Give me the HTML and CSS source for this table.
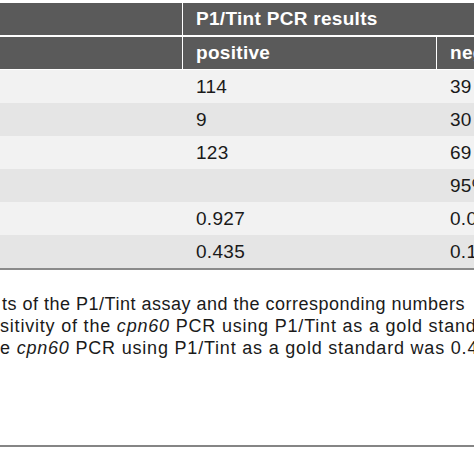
FILE: index.html
```html
<!DOCTYPE html>
<html>
<head>
<meta charset="utf-8">
<link rel="stylesheet" href="styles.css">
</head>
<body>
<div class="frame">
  <div class="table-wrap">
    <table class="results">
      <colgroup>
        <col class="c1"><col class="c2"><col class="c3">
      </colgroup>
      <thead>
        <tr class="h1">
          <th class="sep"></th>
          <th colspan="2">P1/Tint PCR results</th>
        </tr>
        <tr class="h2">
          <th class="sep"></th>
          <th class="sep">positive</th>
          <th>negative</th>
        </tr>
      </thead>
      <tbody>
        <tr class="odd"><td></td><td>114</td><td>39</td></tr>
        <tr class="even"><td></td><td>9</td><td>30</td></tr>
        <tr class="odd"><td></td><td>123</td><td>69</td></tr>
        <tr class="even"><td></td><td></td><td>95% CI</td></tr>
        <tr class="odd"><td></td><td>0.927</td><td>0.067</td></tr>
        <tr class="even last"><td></td><td>0.435</td><td>0.120</td></tr>
      </tbody>
    </table>
  </div>
  <div class="caption">
    <div class="line l1">ts of the P1/Tint assay and the corresponding numbers</div>
    <div class="line l2">sitivity of the <i>cpn60</i> PCR using P1/Tint as a gold standard was 0.927</div>
    <div class="line l3">e <i>cpn60</i> PCR using P1/Tint as a gold standard was 0.435</div>
  </div>
  <div class="rule"></div>
</div>
</body>
</html>
```
FILE: styles.css
```css
html, body {
  margin: 0;
  padding: 0;
  background: #ffffff;
}
.frame {
  width: 474px;
  height: 474px;
  overflow: hidden;
  font-family: "Liberation Sans", Arial, sans-serif;
  color: #1a1a1a;
}
.table-wrap {
  padding-top: 3px;
  width: 474px;
  overflow: hidden;
}
.results {
  border-collapse: separate;
  border-spacing: 0;
  width: 640px;
  table-layout: fixed;
  font-size: 19px;
  letter-spacing: 0.3px;
}
.c1 { width: 183px; }
.c2 { width: 254px; }
.c3 { width: 203px; }
.results th {
  background: #5a5a5a;
  color: #ffffff;
  font-weight: bold;
  text-align: left;
  padding: 0 0 0 13px;
  height: 32px;
  border-bottom: 2px solid #ffffff;
  white-space: nowrap;
}
.results th.sep {
  border-right: 1px solid #ffffff;
}
.results tr.h2 th {
  height: 32px;
  border-bottom: 1px solid #ffffff;
}
.results td {
  height: 33px;
  padding: 0 0 0 13px;
  white-space: nowrap;
}
.results tr.odd td { background: #f2f2f2; }
.results tr.even td { background: #e5e5e5; }
.results tr.last td { border-bottom: 2px solid #8a8a8a; }
.caption {
  margin-top: 23px;
  font-size: 18px;
  letter-spacing: 0.8px;
  line-height: 22px;
  white-space: nowrap;
  overflow: hidden;
  width: 474px;
}
.l1 { padding-left: 2px; letter-spacing: 0.5px; }
.l2 { padding-left: 0; }
.l3 { padding-left: 0; }
.rule {
  margin-top: 86px;
  height: 2px;
  background: #858585;
}
```
